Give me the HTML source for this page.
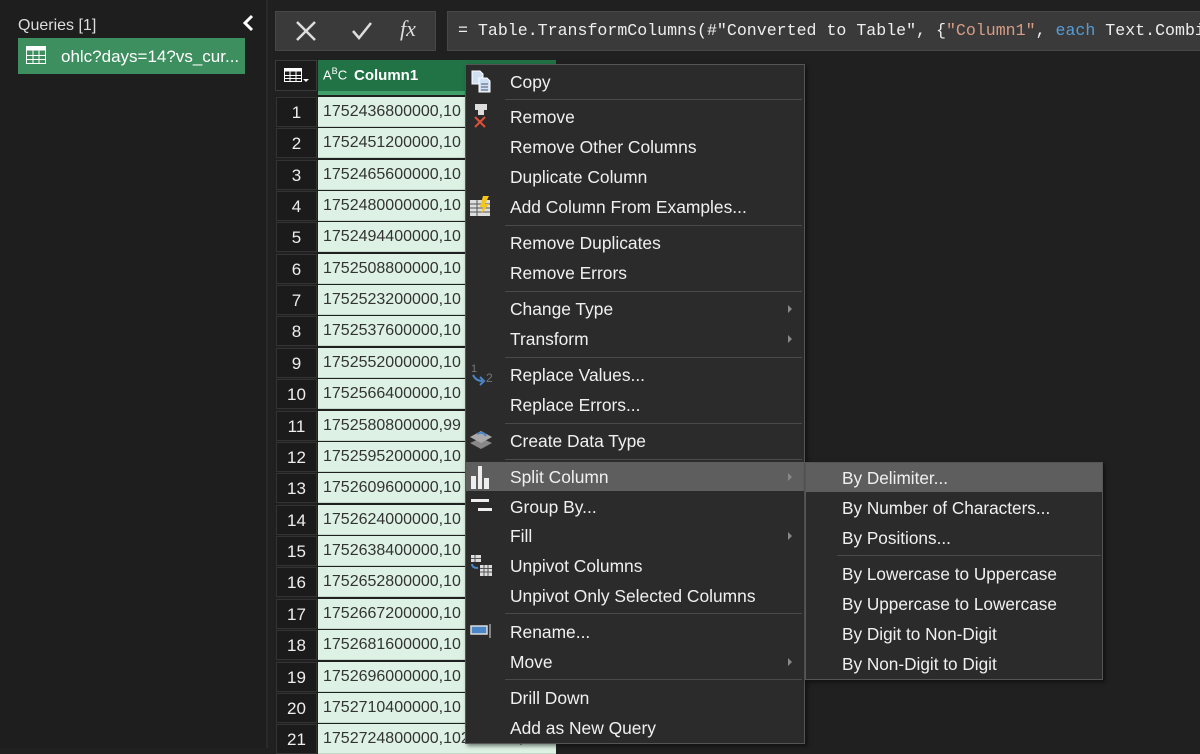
<!DOCTYPE html>
<html><head><meta charset="utf-8"><style>
*{margin:0;padding:0;box-sizing:border-box}
body{width:1200px;height:748px;overflow:hidden;background:#202020;font-family:"Liberation Sans",sans-serif;position:relative;color:#fff}
.a{position:absolute}
.mi{position:absolute;left:510px;font-size:17.4px;color:#f0f0f0;line-height:20px;white-space:nowrap}
.sep{position:absolute;left:505px;width:297px;height:1px;background:#4a4a4a}
.arr{position:absolute;left:788px;width:0;height:0;border-top:4px solid transparent;border-bottom:4px solid transparent;border-left:4px solid #888}
.si{position:absolute;left:842px;font-size:17.2px;color:#f0f0f0;line-height:20px;white-space:nowrap}
.rn{position:absolute;left:276px;width:41px;height:30px;background:#1b1b1b;border:1px solid #333;font-size:17px;text-align:center;line-height:29px;color:#eee}
.dc{position:absolute;left:318px;width:238px;height:30px;background:#ddf2e4;border-bottom:1px solid #c4d8ca;font-size:16px;line-height:30px;color:#333;padding-left:5px;overflow:hidden;white-space:nowrap}
</style></head><body>
<div class="a" style="left:0;top:0;width:266px;height:748px;background:#1e1e1e"></div>
<div class="a" style="left:266px;top:0;width:2px;height:748px;background:#2a2a2a"></div>
<div class="a" style="left:18px;top:17px;font-size:16px;color:#ddd">Queries [1]</div>
<svg class="a" style="left:241px;top:14px" width="14" height="18"><path d="M11 2 L4 9 L11 16" stroke="#fff" stroke-width="3" fill="none"/></svg>
<div class="a" style="left:18px;top:38px;width:227px;height:36px;background:#3d8f5f"></div>
<svg class="a" style="left:26px;top:46px" width="20" height="18"><rect x="0.5" y="0.5" width="19" height="17" fill="none" stroke="#fff"/><rect x="0.5" y="0.5" width="19" height="4" fill="#fff"/><path d="M0 9.5H20M0 13.5H20M7 4V18M13 4V18" stroke="#fff"/></svg>
<div class="a" style="left:61px;top:47px;font-size:17px;color:#fff">ohlc?days=14?vs_cur...</div>

<div class="a" style="left:275px;top:11px;width:161px;height:40px;background:#3a3a3a;border:1px solid #474747"></div>
<svg class="a" style="left:294px;top:19px" width="24" height="24"><path d="M3 3L21 21M21 3L3 21" stroke="#ddd" stroke-width="2.5"/></svg>
<svg class="a" style="left:350px;top:19px" width="24" height="24"><path d="M3 12L9 19L21 4" stroke="#ddd" stroke-width="2.5" fill="none"/></svg>
<div class="a" style="left:400px;top:16px;font-family:'Liberation Serif',serif;font-style:italic;font-size:22px;color:#ddd">fx</div>
<div class="a" style="left:447px;top:11px;width:760px;height:40px;background:#3a3a3a;border:1px solid #474747"></div>
<div class="a" style="left:458px;top:21px;font-family:'Liberation Mono',monospace;font-size:16.6px;color:#eee;white-space:nowrap">= Table.TransformColumns(#"Converted to Table", {<span style="color:#d69d85">"Column1"</span>, <span style="color:#569cd6">each</span> Text.Combine</div>

<div class="a" style="left:275px;top:60px;width:42px;height:31px;background:#1b1b1b;border:1px solid #3a3a3a"></div>
<svg class="a" style="left:284px;top:68px" width="26" height="16"><rect x="0.5" y="0.5" width="17" height="13" fill="none" stroke="#fff"/><rect x="0.5" y="0.5" width="17" height="3" fill="#fff"/><path d="M0 7.5H18M0 10.5H18M6 3V14M12 3V14" stroke="#fff"/><path d="M19 11L25 11L22 14Z" fill="#fff"/></svg>
<div class="a" style="left:318px;top:60px;width:238px;height:31px;background:#217346"></div>
<div class="a" style="left:318px;top:91px;width:238px;height:4px;background:#3fa06a"></div>
<div class="a" style="left:323px;top:66px;font-size:13px;color:#fff">A<sup style="font-size:9px">B</sup>C</div>
<div class="a" style="left:354px;top:67px;font-size:15px;font-weight:bold;color:#fff">Column1</div>

<div class="rn" style="top:97px">1</div><div class="dc" style="top:97px">1752436800000,10</div>
<div class="rn" style="top:128px">2</div><div class="dc" style="top:128px">1752451200000,10</div>
<div class="rn" style="top:160px">3</div><div class="dc" style="top:160px">1752465600000,10</div>
<div class="rn" style="top:191px">4</div><div class="dc" style="top:191px">1752480000000,10</div>
<div class="rn" style="top:222px">5</div><div class="dc" style="top:222px">1752494400000,10</div>
<div class="rn" style="top:254px">6</div><div class="dc" style="top:254px">1752508800000,10</div>
<div class="rn" style="top:285px">7</div><div class="dc" style="top:285px">1752523200000,10</div>
<div class="rn" style="top:316px">8</div><div class="dc" style="top:316px">1752537600000,10</div>
<div class="rn" style="top:348px">9</div><div class="dc" style="top:348px">1752552000000,10</div>
<div class="rn" style="top:379px">10</div><div class="dc" style="top:379px">1752566400000,10</div>
<div class="rn" style="top:411px">11</div><div class="dc" style="top:411px">1752580800000,99</div>
<div class="rn" style="top:442px">12</div><div class="dc" style="top:442px">1752595200000,10</div>
<div class="rn" style="top:473px">13</div><div class="dc" style="top:473px">1752609600000,10</div>
<div class="rn" style="top:505px">14</div><div class="dc" style="top:505px">1752624000000,10</div>
<div class="rn" style="top:536px">15</div><div class="dc" style="top:536px">1752638400000,10</div>
<div class="rn" style="top:567px">16</div><div class="dc" style="top:567px">1752652800000,10</div>
<div class="rn" style="top:599px">17</div><div class="dc" style="top:599px">1752667200000,10</div>
<div class="rn" style="top:630px">18</div><div class="dc" style="top:630px">1752681600000,10</div>
<div class="rn" style="top:662px">19</div><div class="dc" style="top:662px">1752696000000,10</div>
<div class="rn" style="top:693px">20</div><div class="dc" style="top:693px">1752710400000,10</div>
<div class="rn" style="top:724px">21</div><div class="dc" style="top:724px">1752724800000,102028.07,1...</div>

<div class="a" style="left:465px;top:64px;width:340px;height:680px;background:#2b2b2b;border:1px solid #555;box-shadow:2px 2px 4px rgba(0,0,0,.5)"></div>
<div class="a" style="left:466px;top:462px;width:338px;height:29px;background:#5e5e5e"></div>
<svg class="a" style="left:471px;top:70px" width="22" height="24"><path d="M1 1h8l3 3v10H1z" fill="#cfe0f5" stroke="#fff"/><path d="M8 8h8l3 3v11H8z" fill="#cfe0f5" stroke="#fff"/><path d="M10 14h7M10 17h7M10 20h7" stroke="#556"/></svg>
<svg class="a" style="left:471px;top:103px" width="20" height="26"><rect x="4" y="1" width="12" height="6" fill="#ddd"/><rect x="7" y="7" width="6" height="5" fill="#ddd"/><path d="M4 14l10 10M14 14L4 24" stroke="#e0503a" stroke-width="2"/></svg>
<svg class="a" style="left:469px;top:195px" width="24" height="22"><rect x="1" y="5" width="20" height="16" fill="#ddd"/><path d="M1 9h20M1 13h20M1 17h20M8 5v16" stroke="#555"/><path d="M14 1l6 0-4 8h4l-8 10 2-7h-3z" fill="#f5c518"/></svg>
<div class="a" style="left:471px;top:363px;font-size:11px;color:#777">1</div>
<svg class="a" style="left:472px;top:372px" width="24" height="14"><path d="M1 3q3 6 9 6" stroke="#4a86c8" stroke-width="2" fill="none"/><path d="M8 5l4 4-4 4" stroke="#4a86c8" stroke-width="2" fill="none"/></svg>
<div class="a" style="left:486px;top:371px;font-size:12px;color:#777">2</div>
<svg class="a" style="left:468px;top:428px" width="26" height="26"><path d="M13 10l11 5-11 6-11-6z" fill="#888"/><path d="M13 3l11 6-11 6-11-6z" fill="#aaa"/><path d="M9 6q6-3 9 2" stroke="#4a86c8" stroke-width="2" fill="none"/></svg>
<svg class="a" style="left:470px;top:464px" width="24" height="26"><rect x="1" y="12" width="5" height="13" fill="#eee"/><rect x="8" y="2" width="4" height="23" fill="#eee"/><rect x="14" y="14" width="5" height="11" fill="#eee"/></svg>
<svg class="a" style="left:470px;top:498px" width="24" height="16"><rect x="1" y="1" width="18" height="3" fill="#eee"/><rect x="8" y="10" width="14" height="3" fill="#eee"/></svg>
<svg class="a" style="left:470px;top:554px" width="24" height="24"><rect x="1" y="1" width="10" height="7" fill="#ddd"/><path d="M1 4.5h10M5 1v7" stroke="#555"/><path d="M2 10q0 4 6 4" stroke="#4a86c8" stroke-width="2" fill="none"/><rect x="10" y="11" width="12" height="11" fill="#ddd"/><path d="M10 14.5h12M10 18h12M14 11v11M18 11v11" stroke="#555"/></svg>
<svg class="a" style="left:470px;top:623px" width="24" height="16"><rect x="1" y="3" width="16" height="8" fill="#4a86c8" stroke="#ddd" stroke-width="1.5"/><path d="M20 1v14" stroke="#ddd"/></svg>

<div class="mi" style="top:72px">Copy</div>
<div class="sep" style="top:99px"></div>
<div class="mi" style="top:107px">Remove</div>
<div class="mi" style="top:137px">Remove Other Columns</div>
<div class="mi" style="top:167px">Duplicate Column</div>
<div class="mi" style="top:197px">Add Column From Examples...</div>
<div class="sep" style="top:225px"></div>
<div class="mi" style="top:233px">Remove Duplicates</div>
<div class="mi" style="top:263px">Remove Errors</div>
<div class="sep" style="top:291px"></div>
<div class="mi" style="top:299px">Change Type</div><div class="arr" style="top:305px"></div>
<div class="mi" style="top:329px">Transform</div><div class="arr" style="top:335px"></div>
<div class="sep" style="top:357px"></div>
<div class="mi" style="top:365px">Replace Values...</div>
<div class="mi" style="top:395px">Replace Errors...</div>
<div class="sep" style="top:423px"></div>
<div class="mi" style="top:431px">Create Data Type</div>
<div class="sep" style="top:459px"></div>
<div class="mi" style="top:467px">Split Column</div><div class="arr" style="top:473px"></div>
<div class="mi" style="top:497px">Group By...</div>
<div class="mi" style="top:526px">Fill</div><div class="arr" style="top:532px"></div>
<div class="mi" style="top:556px">Unpivot Columns</div>
<div class="mi" style="top:586px">Unpivot Only Selected Columns</div>
<div class="sep" style="top:613px"></div>
<div class="mi" style="top:622px">Rename...</div>
<div class="mi" style="top:652px">Move</div><div class="arr" style="top:658px"></div>
<div class="sep" style="top:679px"></div>
<div class="mi" style="top:688px">Drill Down</div>
<div class="mi" style="top:718px">Add as New Query</div>

<div class="a" style="left:805px;top:462px;width:298px;height:218px;background:#2b2b2b;border:1px solid #555;box-shadow:2px 2px 4px rgba(0,0,0,.5)"></div>
<div class="a" style="left:806px;top:463px;width:296px;height:29px;background:#5e5e5e"></div>
<div class="si" style="top:468px">By Delimiter...</div>
<div class="si" style="top:498px">By Number of Characters...</div>
<div class="si" style="top:528px">By Positions...</div>
<div class="a" style="left:837px;top:555px;width:264px;height:1px;background:#4a4a4a"></div>
<div class="si" style="top:564px">By Lowercase to Uppercase</div>
<div class="si" style="top:594px">By Uppercase to Lowercase</div>
<div class="si" style="top:624px">By Digit to Non-Digit</div>
<div class="si" style="top:654px">By Non-Digit to Digit</div>
</body></html>
